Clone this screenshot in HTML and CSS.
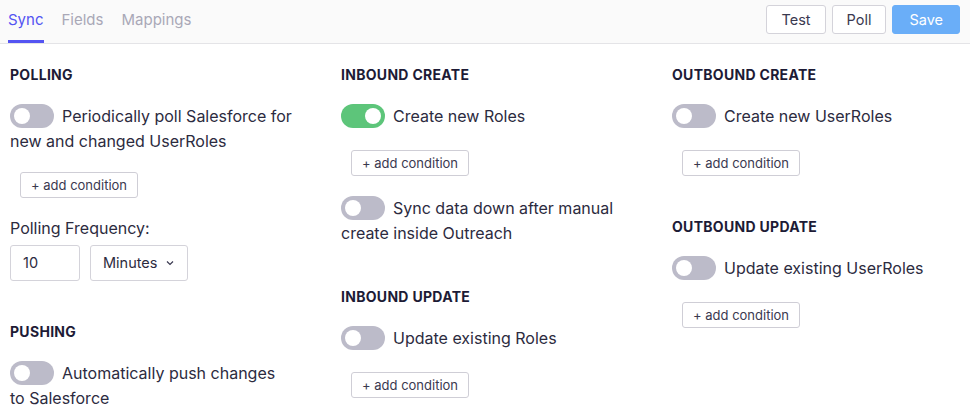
FILE: index.html
```html
<!DOCTYPE html>
<html lang="en">
  <head>
    <meta charset="UTF-8" />
    <meta name="viewport" content="width=device-width, initial-scale=1.0" />
    <title>Sync settings</title>
    <link rel="stylesheet" href="styles.css">
  </head>

  <body>
    <div class="topbar">
      <nav class="tabs">
        <a class="tab active">Sync</a>
        <a class="tab">Fields</a>
        <a class="tab">Mappings</a>
      </nav>
      <div class="actions">
        <button class="btn">Test</button>
        <button class="btn">Poll</button>
        <button class="btn primary">Save</button>
      </div>
    </div>

    <div class="columns">
      <div class="column">
        <div class="section">
          <h3>Polling</h3>
          <div class="option">
            <span class="toggle"></span>Periodically poll Salesforce for new and changed UserRoles
          </div>
          <button class="add-condition first">+ add condition</button>
          <div class="field-label">Polling Frequency:</div>
          <div class="frequency">
            <div class="input">10</div>
            <div class="select">Minutes
              <svg width="10" height="10" viewBox="0 0 10 10"><path d="M2 3.5 L5 6.5 L8 3.5" fill="none" stroke="#3a3950" stroke-width="1.2"/></svg>
            </div>
          </div>
        </div>
        <div class="section">
          <h3>Pushing</h3>
          <div class="option">
            <span class="toggle"></span>Automatically push changes to Salesforce
          </div>
        </div>
      </div>

      <div class="column">
        <div class="section">
          <h3>Inbound Create</h3>
          <div class="option">
            <span class="toggle on"></span>Create new Roles
          </div>
          <button class="add-condition">+ add condition</button>
          <div class="option">
            <span class="toggle"></span>Sync data down after manual create inside Outreach
          </div>
        </div>
        <div class="section">
          <h3>Inbound Update</h3>
          <div class="option">
            <span class="toggle"></span>Update existing Roles
          </div>
          <button class="add-condition">+ add condition</button>
        </div>
      </div>

      <div class="column last">
        <div class="section">
          <h3>Outbound Create</h3>
          <div class="option">
            <span class="toggle"></span>Create new UserRoles
          </div>
          <button class="add-condition">+ add condition</button>
        </div>
        <div class="section">
          <h3>Outbound Update</h3>
          <div class="option">
            <span class="toggle"></span>Update existing UserRoles
          </div>
          <button class="add-condition">+ add condition</button>
        </div>
      </div>
    </div>
  </body>
</html>
```

FILE: styles.css
```css
body {
  margin: 0;
  font-family: Inter, "Liberation Sans", sans-serif;
  color: #2c2b40;
  background-color: #fff;
}
.topbar {
  display: flex;
  justify-content: space-between;
  align-items: flex-start;
  height: 43px;
  padding: 0 10px 0 8px;
  background-color: #fafafa;
  border-bottom: 1px solid #e4e4e7;
}
.tabs {
  display: flex;
  gap: 18px;
}
.tab {
  height: 40px;
  line-height: 40px;
  font-size: 15px;
  color: #a9a8b7;
  border-bottom: 3px solid transparent;
}
.tab.active {
  color: #5454f2;
  border-bottom-color: #5454f2;
}
.actions {
  display: flex;
  gap: 6px;
  padding-top: 5px;
}
.btn {
  height: 29px;
  padding: 0 14px;
  font-family: inherit;
  font-size: 14.5px;
  color: #3a3950;
  background-color: #fff;
  border: 1px solid #d4d3da;
  border-radius: 3px;
}
.btn.primary {
  padding: 0 16px;
  color: #fff;
  background-color: #6aaef8;
  border-color: #6aaef8;
}
.columns {
  display: flex;
  padding: 21px 0 0 10px;
}
.column {
  flex: 0 0 331px;
}
.column.last {
  flex: 1 1 auto;
}
.section + .section {
  margin-top: 41px;
}
h3 {
  margin: 0;
  font-size: 14px;
  line-height: 20px;
  font-weight: 700;
  letter-spacing: 0.3px;
  text-transform: uppercase;
  color: #1d1b36;
}
.option {
  max-width: 283px;
  margin-top: 19px;
  font-size: 16px;
  line-height: 25px;
}
.add-condition + .option {
  margin-top: 20px;
}
.toggle {
  display: inline-block;
  position: relative;
  width: 44px;
  height: 24px;
  margin-right: 8px;
  vertical-align: -6px;
  border-radius: 12px;
  background-color: #bcbbc9;
}
.toggle::after {
  content: "";
  position: absolute;
  top: 4px;
  left: 4px;
  width: 16px;
  height: 16px;
  border-radius: 50%;
  background-color: #fff;
}
.toggle.on {
  background-color: #5dc57a;
}
.toggle.on::after {
  left: 24px;
}
.add-condition {
  display: block;
  height: 26px;
  margin: 21px 0 0 10px;
  padding: 0 10px;
  font-family: inherit;
  font-size: 13px;
  color: #3a3950;
  background-color: #fff;
  border: 1px solid #cfced6;
  border-radius: 3px;
}
.add-condition.first {
  margin-top: 18px;
}
.field-label {
  margin-top: 18px;
  font-size: 16px;
  line-height: 25px;
}
.frequency {
  display: flex;
  gap: 10px;
  margin: 4px 0 1px;
}
.input,
.select {
  height: 34px;
  line-height: 34px;
  font-size: 14.5px;
  border: 1px solid #d4d3da;
  border-radius: 3px;
}
.input {
  width: 56px;
  padding-left: 12px;
}
.select {
  display: flex;
  align-items: center;
  gap: 8px;
  padding: 0 12px;
}
```
